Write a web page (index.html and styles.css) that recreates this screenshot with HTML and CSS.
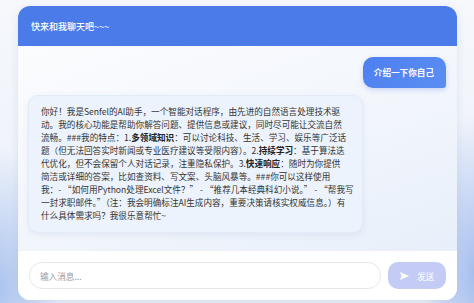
FILE: index.html
```html
<!DOCTYPE html>
<html lang="zh-CN">
<head>
  <meta charset="UTF-8" />
  <meta name="viewport" content="width=device-width, initial-scale=1.0"/>
  <title>聊天</title>
  <link rel="stylesheet" href="styles.css">
</head>
<body>
  <div class="page">
    <div class="chat">
      <div class="chat-header">快来和我聊天吧~~~</div>

      <div class="messages">
        <div class="msg user">介绍一下你自己</div>
        <div class="msg bot">你好！我是Senfel的AI助手，一个智能对话程序，由先进的自然语言处理技术驱<br>动。我的核心功能是帮助你解答问题、提供信息或建议，同时尽可能让交流自然<br>流畅。###我的特点：1.<b>多领域知识</b>：可以讨论科技、生活、学习、娱乐等广泛话<br>题（但无法回答实时新闻或专业医疗建议等受限内容）。2.<b>持续学习</b>：基于算法迭<br>代优化，但不会保留个人对话记录，注重隐私保护。3.<b>快速响应</b>：随时为你提供<br>简洁或详细的答案，比如查资料、写文案、头脑风暴等。###你可以这样使用<br>我：- “如何用Python处理Excel文件？” - “推荐几本经典科幻小说。” - “帮我写<br>一封求职邮件。”（注：我会明确标注AI生成内容，重要决策请核实权威信息。）有<br>什么具体需求吗？我很乐意帮忙~</div>
      </div>

      <div class="composer">
        <input class="composer-input" type="text" placeholder="输入消息...">
        <button class="send-btn" disabled>
          <svg width="9" height="8" viewBox="0 0 9 8"><path d="M0 0 L9 4 L0 8 L1.6 4 Z" fill="#fff"/></svg>
          发送
        </button>
      </div>
    </div>
  </div>
</body>
</html>
```

FILE: styles.css
```css
html, body {
  margin: 0;
  height: 100%;
}
body {
  font-family: "Noto Sans CJK SC", "Noto Sans", sans-serif;
  background:
    radial-gradient(ellipse 60px 140px at 0% 95%, rgba(120,160,230,0.55), rgba(120,160,230,0) 100%),
    radial-gradient(ellipse 50px 160px at 100% 90%, rgba(110,150,230,0.55), rgba(110,150,230,0) 100%),
    linear-gradient(180deg, #f6f8fc 0%, #e9eff9 100%);
}
.page {
  box-sizing: border-box;
  height: 303px;
  padding: 6px 17px 3px 18px;
}
.chat {
  height: 100%;
  display: flex;
  flex-direction: column;
  border-radius: 12px;
  overflow: hidden;
  background: #fff;
  box-shadow: 0 2px 10px rgba(60,90,160,0.12);
}
.chat-header {
  height: 40px;
  flex-shrink: 0;
  display: flex;
  align-items: center;
  padding-left: 13px;
  background: #4a7be8;
  color: #fff;
  font-size: 9px;
  font-weight: 500;
}
.messages {
  flex: 1;
  display: flex;
  flex-direction: column;
  gap: 7px;
  padding: 11px 11px 0 10px;
  background: linear-gradient(160deg, #fbfcfe 0%, #f2f6fc 55%, #e7effa 100%);
}
.msg {
  font-size: 8.6px;
  line-height: 13px;
  border-radius: 10px;
}
.user {
  align-self: flex-end;
  padding: 9px 12px 9px 11px;
  color: #fff;
  font-weight: 700;
  border-bottom-right-radius: 3px;
  background: linear-gradient(135deg, #4e7ff0, #5b8ef2);
  box-shadow: 0 2px 5px rgba(70,110,220,0.25);
}
.bot {
  align-self: flex-start;
  width: 309px;
  padding: 9px 12px 10px 12px;
  white-space: nowrap;
  color: #333;
  background: #edf3fc;
  border: 1px solid #e3ebf7;
  box-shadow: 0 2px 6px rgba(80,110,170,0.1);
}
.bot b {
  color: #222;
}
.composer {
  height: 50px;
  flex-shrink: 0;
  box-sizing: border-box;
  display: flex;
  align-items: center;
  gap: 7px;
  padding: 0 11px 0 11px;
  background: #fff;
  border-top: 1px solid #eef1f6;
}
.composer-input {
  flex: 1;
  height: 27px;
  box-sizing: border-box;
  padding: 0 10px;
  border: 1px solid #e4e7ec;
  border-radius: 13px;
  font-family: inherit;
  font-size: 8.6px;
  color: #333;
  outline: none;
}
.composer-input::placeholder {
  color: #9a9da3;
}
.send-btn {
  width: 58px;
  height: 27px;
  display: flex;
  align-items: center;
  justify-content: center;
  gap: 8px;
  border: none;
  border-radius: 10px;
  background: #c4ccf6;
  color: #fff;
  font-family: inherit;
  font-size: 8.6px;
}
```
